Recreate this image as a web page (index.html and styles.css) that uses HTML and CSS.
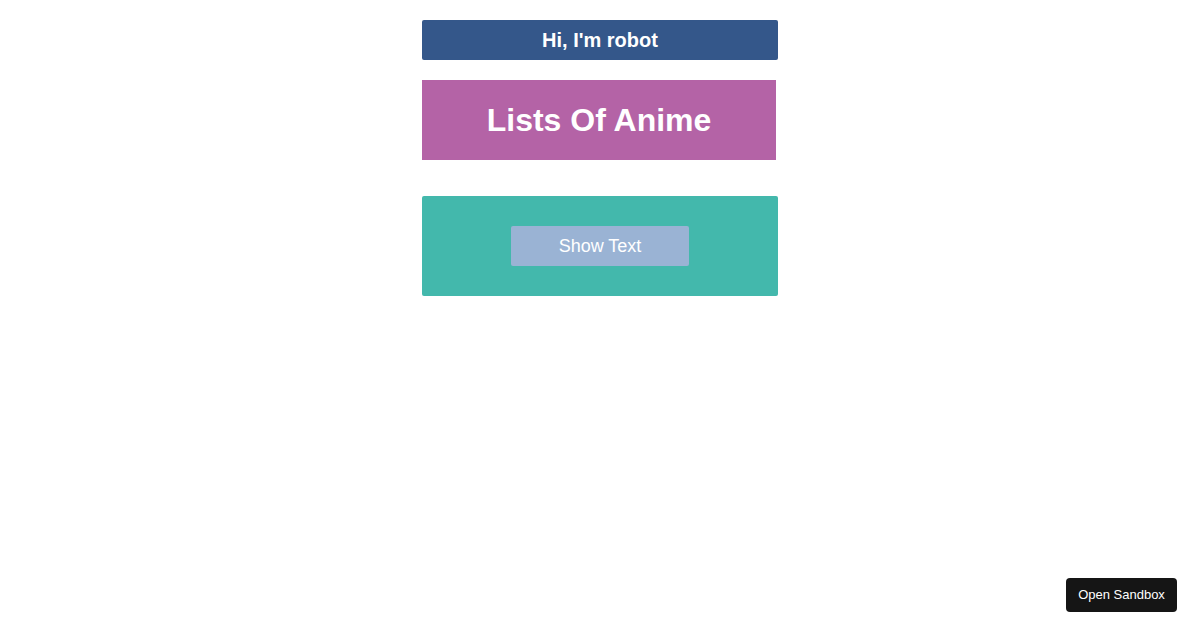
FILE: index.html
```html
<!DOCTYPE html>
<html>
<head>
    <title>Anime</title>
    <link rel="stylesheet" href="styles.css">
</head>
<body>
    <div class="app">
        <h2 class="greeting">Hi, I'm robot</h2>
        <h1 class="title">Lists Of Anime</h1>
        <div class="panel">
            <button class="show-btn">Show Text</button>
        </div>
    </div>
    <a class="sandbox-btn" href="#">Open Sandbox</a>
</body>
</html>
```

FILE: styles.css
```css
body {
    font-family: "Liberation Sans", Arial, sans-serif;
    margin: 0;
    padding: 20px 0 0;
    background: #fff;
}
.app {
    width: 356px;
    margin: 0 auto;
}
.greeting {
    margin: 0;
    height: 40px;
    line-height: 40px;
    background-color: #34578a;
    color: #fff;
    text-align: center;
    font-size: 20px;
    font-weight: bold;
    border-radius: 2px;
}
.title {
    margin: 20px 0 0;
    width: 354px;
    height: 80px;
    line-height: 80px;
    background-color: #b463a6;
    color: #fff;
    text-align: center;
    font-size: 32px;
    font-weight: bold;
}
.panel {
    margin-top: 36px;
    height: 100px;
    background-color: #43b8ac;
    border-radius: 2px;
    display: flex;
    justify-content: center;
    align-items: center;
}
.show-btn {
    width: 178px;
    height: 40px;
    border: none;
    border-radius: 2px;
    background-color: #9ab3d4;
    color: #fff;
    font-family: "Liberation Sans", Arial, sans-serif;
    font-size: 18px;
    cursor: pointer;
}
.sandbox-btn {
    position: fixed;
    right: 23px;
    bottom: 18px;
    width: 111px;
    height: 34px;
    line-height: 34px;
    text-align: center;
    background-color: #151515;
    color: #fff;
    border-radius: 4px;
    font-size: 13px;
    text-decoration: none;
}
```
